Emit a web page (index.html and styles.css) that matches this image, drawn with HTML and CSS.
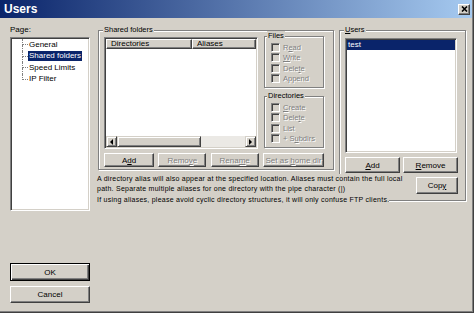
FILE: index.html
```html
<!DOCTYPE html>
<html lang="en">
<head>
  <meta charset="UTF-8">
  <meta name="viewport" content="width=device-width, initial-scale=1.0">
  <title>Users</title>
  <link rel="stylesheet" href="styles.css">
</head>
<body>
  <div class="window">
    <div class="titlebar">
      <span class="title">Users</span>
      <span class="close-btn">
        <svg width="7" height="6" viewBox="0 0 7 6"><path d="M1 0.5 6 5.5M6 0.5 1 5.5" stroke="#000" stroke-width="1.6"/></svg>
      </span>
    </div>

    <div class="client">
      <!-- Page selector -->
      <div class="left-col">
        <div class="page-label">Page:</div>
        <div class="tree sunken">
          <ul>
            <li><span class="branch"></span><span class="node">General</span></li>
            <li><span class="branch"></span><span class="node selected">Shared folders</span></li>
            <li><span class="branch"></span><span class="node">Speed Limits</span></li>
            <li><span class="branch"></span><span class="node">IP Filter</span></li>
          </ul>
        </div>
        <button class="btn default ok-btn">OK</button>
        <button class="btn cancel-btn">Cancel</button>
      </div>

      <div class="page">
        <!-- Shared folders -->
        <fieldset class="group shared">
          <legend>Shared folders</legend>
          <div class="shared-body">
            <div class="listview sunken">
              <div class="lv-header">
                <span class="lv-col col-dir">Directories</span>
                <span class="lv-col col-alias">Aliases</span>
              </div>
              <div class="lv-rows"></div>
              <div class="hscroll">
                <span class="sb-btn raised">
                  <svg width="3" height="6" viewBox="0 0 3 6"><path d="M3 0V6L0 3z"/></svg>
                </span>
                <span class="sb-thumb raised"></span>
                <span class="sb-track"></span>
                <span class="sb-btn raised">
                  <svg width="3" height="6" viewBox="0 0 3 6"><path d="M0 0V6L3 3z"/></svg>
                </span>
              </div>
            </div>

            <div class="perms">
              <fieldset class="group sub">
                <legend>Files</legend>
                <label class="check"><input type="checkbox" disabled><span>R<u>e</u>ad</span></label>
                <label class="check"><input type="checkbox" disabled><span><u>W</u>rite</span></label>
                <label class="check"><input type="checkbox" disabled><span>Dele<u>t</u>e</span></label>
                <label class="check"><input type="checkbox" disabled><span>Append</span></label>
              </fieldset>
              <fieldset class="group sub dirs">
                <legend>Directories</legend>
                <label class="check"><input type="checkbox" disabled><span><u>C</u>reate</span></label>
                <label class="check"><input type="checkbox" disabled><span>Dele<u>t</u>e</span></label>
                <label class="check"><input type="checkbox" disabled><span>List</span></label>
                <label class="check"><input type="checkbox" disabled><span>+ S<u>u</u>bdirs</span></label>
              </fieldset>
            </div>
          </div>

          <div class="folder-actions">
            <button class="btn w-add">A<u>d</u>d</button>
            <button class="btn w-remove" disabled>Remo<u>v</u>e</button>
            <button class="btn w-rename" disabled>Rena<u>m</u>e</button>
            <button class="btn w-home" disabled>Set as <u>h</u>ome dir</button>
          </div>
        </fieldset>

        <!-- Users -->
        <fieldset class="group users">
          <legend><u>U</u>sers</legend>
          <div class="listbox sunken">
            <div class="lb-item selected">test</div>
          </div>
          <div class="user-actions">
            <button class="btn"><u>A</u>dd</button>
            <button class="btn"><u>R</u>emove</button>
          </div>
          <button class="btn copy-btn">Cop<u>y</u></button>
        </fieldset>

        <div class="note">
          <p>A directory alias will also appear at the specified location. Aliases must contain the full local<br>path. Separate multiple aliases for one directory with the pipe character (|)</p>
          <p class="note-warn">If using aliases, please avoid cyclic directory structures, it will only confuse FTP clients.</p>
        </div>
      </div>
    </div>
  </div>
</body>
</html>
```

FILE: styles.css
```css
body {
  margin: 0;
  background-color: #d4d0c8;
  font-family: "Liberation Sans", Arial, sans-serif;
  color: #000;
}

.window {
  width: 474px;
  height: 313px;
  box-sizing: border-box;
  padding-right: 2px;
  background-color: #d4d0c8;
  box-shadow: inset -1px -1px 0 #404040, inset -2px -2px 0 #808080;
  overflow: hidden;
}

/* Title bar */
.titlebar {
  height: 18px;
  display: flex;
  align-items: center;
  justify-content: space-between;
  padding: 0 2px 0 4px;
  background: linear-gradient(to right, #0a246a, #a6caf0);
}

.title {
  color: white;
  font-size: 12px;
  font-weight: bold;
}

.close-btn {
  width: 12px;
  height: 11px;
  box-sizing: border-box;
  display: flex;
  align-items: center;
  justify-content: center;
  background-color: #d4d0c8;
  border: 1px solid;
  border-color: #fff #404040 #404040 #fff;
  box-shadow: inset -1px -1px 0 #808080;
}

/* Client area */
.client {
  display: flex;
  gap: 8px;
  padding: 7px 0 0 10px;
}

.left-col {
  width: 80px;
  display: flex;
  flex-direction: column;
}

.page-label {
  font-size: 8px;
  line-height: 10px;
  height: 10px;
}

.sunken {
  box-sizing: border-box;
  padding: 1px;
  background-color: white;
  border: 1px solid;
  border-color: #808080 #fff #fff #808080;
  box-shadow: inset 1px 1px 0 #404040, inset -1px -1px 0 #d4d0c8;
}

.raised {
  box-sizing: border-box;
  background-color: #d4d0c8;
  border: 1px solid;
  border-color: #d4d0c8 #404040 #404040 #d4d0c8;
  box-shadow: inset 1px 1px 0 #fff, inset -1px -1px 0 #808080;
}

/* Tree */
.tree {
  margin-top: 2px;
  height: 174px;
}

.tree ul {
  list-style: none;
  margin: 0;
  padding: 0 0 0 10px;
}

.tree li {
  display: flex;
  align-items: center;
  height: 11.5px;
  font-size: 8px;
}

.branch {
  width: 6px;
  align-self: stretch;
  display: flex;
  flex-direction: column;
}

.branch:before {
  content: "";
  flex: 1;
  border-left: 1px dotted #808080;
  border-bottom: 1px dotted #808080;
}

.branch:after {
  content: "";
  flex: 1;
  border-left: 1px dotted #808080;
}

.tree li:last-child .branch:after {
  border-left-color: transparent;
}

.node {
  padding: 0 1px;
  line-height: 10px;
  white-space: nowrap;
}

.selected {
  background-color: #0a246a;
  color: white;
}

/* Buttons */
.btn {
  box-sizing: border-box;
  margin: 0;
  padding: 0;
  font-family: inherit;
  font-size: 8px;
  color: #000;
  background-color: #d4d0c8;
  border: 1px solid;
  border-color: #fff #404040 #404040 #fff;
  box-shadow: inset -1px -1px 0 #808080;
  white-space: nowrap;
  overflow: hidden;
}

.btn:disabled {
  color: #808080;
  text-shadow: 1px 1px 0 #fff;
}

.btn.default {
  border-color: #000;
  box-shadow: inset 1px 1px 0 #fff, inset -1px -1px 0 #404040, inset -2px -2px 0 #808080;
}

.ok-btn {
  margin-top: 52px;
  height: 18px;
}

.cancel-btn {
  margin-top: 5px;
  height: 17px;
}

/* Property page */
.page {
  display: grid;
  grid-template-columns: 236px 127px;
  grid-template-rows: 145px 31px;
  column-gap: 5px;
}

.group {
  box-sizing: border-box;
  margin: 0;
  min-width: 0;
  border: 1px solid #808080;
  box-shadow: 1px 1px 0 #fff, inset 1px 1px 0 #fff;
}

.group legend {
  padding: 0 1px;
  margin-left: -1px;
  font-size: 7.5px;
  line-height: 10px;
  background-color: #d4d0c8;
}

.shared {
  grid-area: 1 / 1 / 2 / 2;
  height: 145px;
  padding: 2px 0 0 5px;
}

.shared-body {
  display: flex;
  align-items: flex-start;
  gap: 6px;
}

/* List view */
.listview {
  width: 154px;
  height: 112px;
  display: flex;
  flex-direction: column;
}

.lv-header {
  display: flex;
  height: 10px;
}

.lv-col {
  box-sizing: border-box;
  padding-left: 4px;
  font-size: 8px;
  line-height: 8px;
  background-color: #d4d0c8;
  border: 1px solid;
  border-color: #fff #404040 #404040 #fff;
  box-shadow: inset -1px -1px 0 #808080;
}

.col-dir {
  width: 86px;
}

.col-alias {
  flex: 1;
}

.lv-rows {
  flex: 1;
}

.hscroll {
  display: flex;
  height: 11px;
}

.sb-btn {
  width: 11px;
  display: flex;
  align-items: center;
  justify-content: center;
}

.sb-thumb {
  width: 84px;
}

.sb-track {
  flex: 1;
  background-color: #ebe9e5;
}

/* Permission groups */
.perms {
  width: 60px;
  margin-top: -6px;
}

.sub {
  height: 57px;
  padding: 1px 0 0 6px;
}

.sub legend {
  margin-left: -4px;
}

.dirs {
  margin-top: 3px;
}

.check {
  display: flex;
  align-items: center;
  gap: 3px;
  height: 10.5px;
  font-size: 7.5px;
  color: #808080;
  text-shadow: 1px 1px 0 #fff;
  white-space: nowrap;
}

.check input {
  appearance: none;
  margin: 0;
  width: 9px;
  height: 9px;
  box-sizing: border-box;
  background-color: #d4d0c8;
  border: 1px solid;
  border-color: #808080 #fff #fff #808080;
  box-shadow: inset 1px 1px 0 #404040, inset -1px -1px 0 #d4d0c8;
}

.folder-actions {
  display: flex;
  justify-content: space-between;
  width: 220px;
  margin-top: 4px;
}

.folder-actions .btn {
  height: 14px;
}

.w-add {
  width: 50px;
}

.w-remove,
.w-rename {
  width: 48px;
}

.w-home {
  width: 61px;
}

/* Users */
.users {
  grid-area: 1 / 2 / 3 / 3;
  height: 176px;
  padding: 3px 0 0 5px;
}

.listbox {
  width: 112px;
  height: 115px;
}

.lb-item {
  height: 10px;
  padding-left: 1px;
  font-size: 8px;
  line-height: 10px;
}

.user-actions {
  display: flex;
  justify-content: space-between;
  width: 113px;
  margin-top: 4px;
}

.user-actions .btn {
  width: 55px;
  height: 16px;
}

.copy-btn {
  display: block;
  width: 42px;
  height: 17px;
  margin: 4px 0 0 71px;
}

/* Help text */
.note {
  grid-area: 2 / 1 / 3 / 3;
  z-index: 1;
  margin: 4px 0 0 -1px;
}

.note p {
  margin: 0;
  width: max-content;
  font-size: 7px;
  line-height: 9.5px;
  letter-spacing: 0.25px;
  background-color: #d4d0c8;
}

.note .note-warn {
  padding-top: 1.5px;
}
```
